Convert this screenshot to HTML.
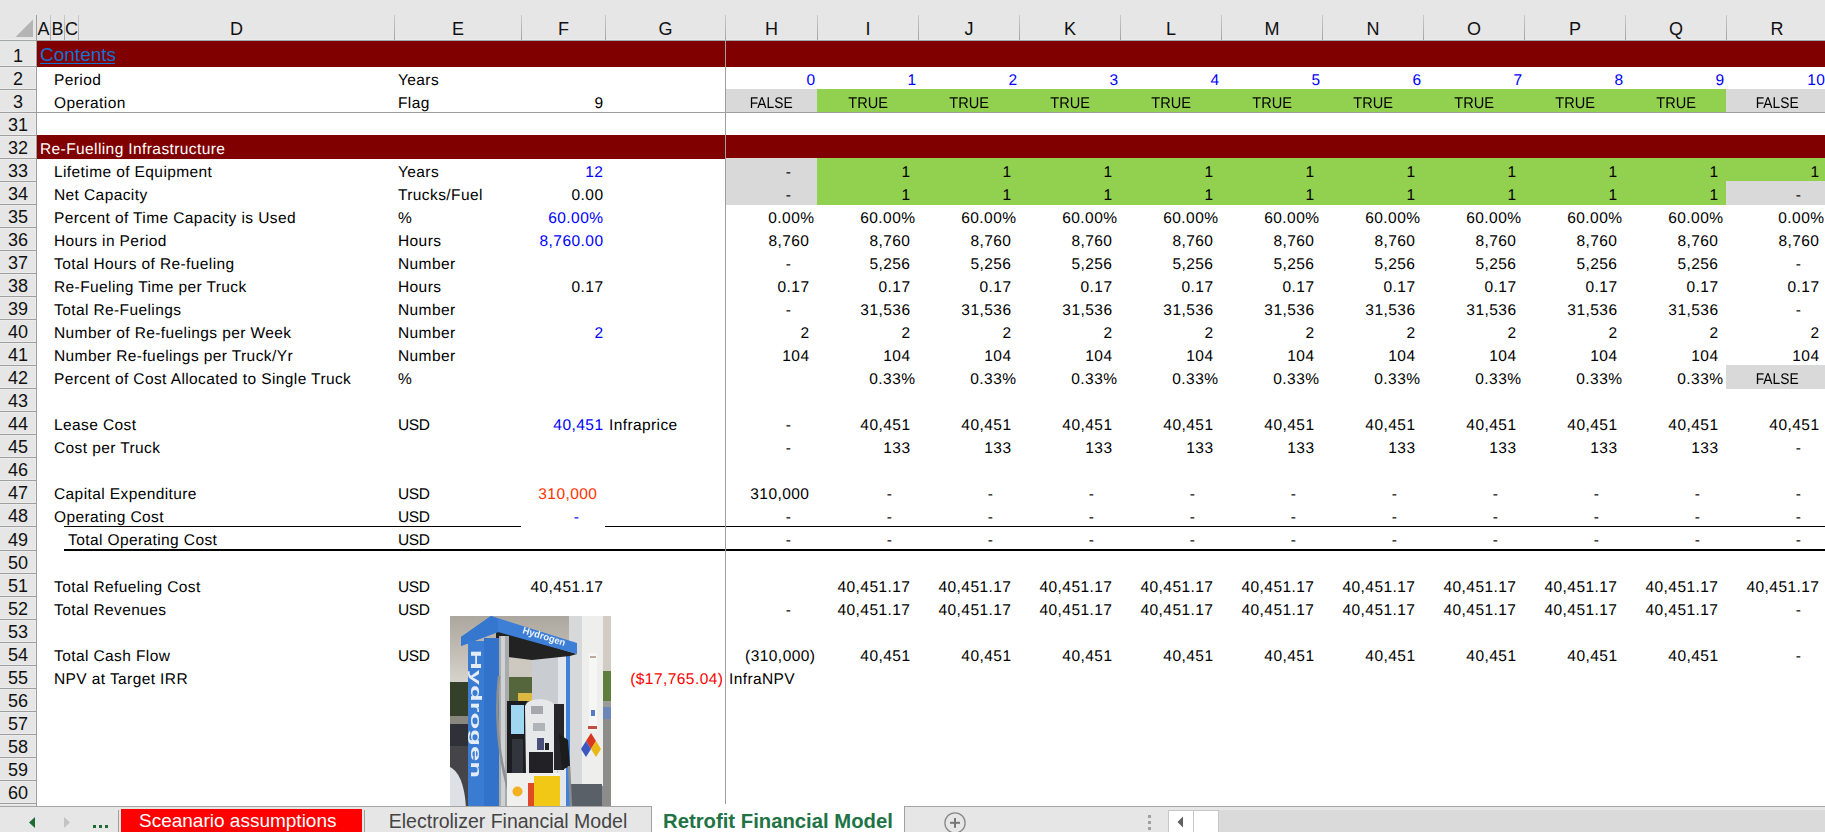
<!DOCTYPE html><html><head><meta charset="utf-8"><style>
html,body{margin:0;padding:0;}
body{width:1825px;height:832px;overflow:hidden;position:relative;background:#fff;font-family:'Liberation Sans', sans-serif;color:#000;}
div{position:absolute;box-sizing:border-box;}
.t{font-size:15.5px;line-height:20px;height:20px;white-space:nowrap;letter-spacing:0.45px;text-rendering:geometricPrecision;}
.lb{letter-spacing:0.4px;}
.r{text-align:right;}
.c{text-align:center;}
.hd{font-size:18px;line-height:20px;height:20px;white-space:nowrap;text-align:center;color:#111;}
</style></head><body>

<div style="left:0;top:0;width:1825px;height:40px;background:#e6e6e6"></div>
<div style="left:0;top:39px;width:1825px;height:1px;background:#ececec"></div>
<div style="left:0;top:40px;width:1825px;height:1px;background:#a2a8a8"></div>
<svg style="position:absolute;left:0;top:0" width="36" height="40"><polygon points="15.5,37 33,37 33,19.5" fill="#b4b4b4"/></svg>
<div style="left:36px;top:15px;width:1px;height:25px;background:linear-gradient(#cacaca,#a4a4a4)"></div>
<div style="left:50px;top:15px;width:1px;height:25px;background:linear-gradient(#cacaca,#a4a4a4)"></div>
<div style="left:64px;top:15px;width:1px;height:25px;background:linear-gradient(#cacaca,#a4a4a4)"></div>
<div style="left:78px;top:15px;width:1px;height:25px;background:linear-gradient(#cacaca,#a4a4a4)"></div>
<div style="left:394px;top:15px;width:1px;height:25px;background:linear-gradient(#cacaca,#a4a4a4)"></div>
<div style="left:521px;top:15px;width:1px;height:25px;background:linear-gradient(#cacaca,#a4a4a4)"></div>
<div style="left:605px;top:15px;width:1px;height:25px;background:linear-gradient(#cacaca,#a4a4a4)"></div>
<div style="left:725px;top:15px;width:1px;height:25px;background:linear-gradient(#cacaca,#a4a4a4)"></div>
<div style="left:817px;top:15px;width:1px;height:25px;background:linear-gradient(#cacaca,#a4a4a4)"></div>
<div style="left:918px;top:15px;width:1px;height:25px;background:linear-gradient(#cacaca,#a4a4a4)"></div>
<div style="left:1019px;top:15px;width:1px;height:25px;background:linear-gradient(#cacaca,#a4a4a4)"></div>
<div style="left:1120px;top:15px;width:1px;height:25px;background:linear-gradient(#cacaca,#a4a4a4)"></div>
<div style="left:1221px;top:15px;width:1px;height:25px;background:linear-gradient(#cacaca,#a4a4a4)"></div>
<div style="left:1322px;top:15px;width:1px;height:25px;background:linear-gradient(#cacaca,#a4a4a4)"></div>
<div style="left:1423px;top:15px;width:1px;height:25px;background:linear-gradient(#cacaca,#a4a4a4)"></div>
<div style="left:1524px;top:15px;width:1px;height:25px;background:linear-gradient(#cacaca,#a4a4a4)"></div>
<div style="left:1625px;top:15px;width:1px;height:25px;background:linear-gradient(#cacaca,#a4a4a4)"></div>
<div style="left:1726px;top:15px;width:1px;height:25px;background:linear-gradient(#cacaca,#a4a4a4)"></div>
<div class="hd" style="left:37px;top:19px;width:13px">A</div>
<div class="hd" style="left:51px;top:19px;width:13px">B</div>
<div class="hd" style="left:65px;top:19px;width:13px">C</div>
<div class="hd" style="left:79px;top:19px;width:315px">D</div>
<div class="hd" style="left:395px;top:19px;width:126px">E</div>
<div class="hd" style="left:522px;top:19px;width:83px">F</div>
<div class="hd" style="left:606px;top:19px;width:119px">G</div>
<div class="hd" style="left:726px;top:19px;width:91px">H</div>
<div class="hd" style="left:818px;top:19px;width:100px">I</div>
<div class="hd" style="left:919px;top:19px;width:100px">J</div>
<div class="hd" style="left:1020px;top:19px;width:100px">K</div>
<div class="hd" style="left:1121px;top:19px;width:100px">L</div>
<div class="hd" style="left:1222px;top:19px;width:100px">M</div>
<div class="hd" style="left:1323px;top:19px;width:100px">N</div>
<div class="hd" style="left:1424px;top:19px;width:100px">O</div>
<div class="hd" style="left:1525px;top:19px;width:100px">P</div>
<div class="hd" style="left:1626px;top:19px;width:100px">Q</div>
<div class="hd" style="left:1727px;top:19px;width:100px">R</div>
<div style="left:0;top:41px;width:36px;height:765px;background:#e6e6e6"></div>
<div style="left:35px;top:41px;width:1px;height:765px;background:#ececec"></div>
<div style="left:36px;top:15px;width:1px;height:791px;background:#9e9e9e"></div>
<div style="left:0;top:65px;width:35px;height:3px;background:#ececec"></div>
<div style="left:0;top:66px;width:36px;height:1px;background:#9e9e9e"></div>
<div class="hd" style="left:0;top:46px;width:36px">1</div>
<div style="left:0;top:88px;width:35px;height:3px;background:#ececec"></div>
<div style="left:0;top:89px;width:36px;height:1px;background:#9e9e9e"></div>
<div class="hd" style="left:0;top:69px;width:36px">2</div>
<div style="left:0;top:111px;width:35px;height:3px;background:#ececec"></div>
<div style="left:0;top:112px;width:36px;height:1px;background:#9e9e9e"></div>
<div class="hd" style="left:0;top:92px;width:36px">3</div>
<div style="left:0;top:134px;width:35px;height:3px;background:#ececec"></div>
<div style="left:0;top:135px;width:36px;height:1px;background:#9e9e9e"></div>
<div class="hd" style="left:0;top:115px;width:36px">31</div>
<div style="left:0;top:157px;width:35px;height:3px;background:#ececec"></div>
<div style="left:0;top:158px;width:36px;height:1px;background:#9e9e9e"></div>
<div class="hd" style="left:0;top:138px;width:36px">32</div>
<div style="left:0;top:180px;width:35px;height:3px;background:#ececec"></div>
<div style="left:0;top:181px;width:36px;height:1px;background:#9e9e9e"></div>
<div class="hd" style="left:0;top:161px;width:36px">33</div>
<div style="left:0;top:203px;width:35px;height:3px;background:#ececec"></div>
<div style="left:0;top:204px;width:36px;height:1px;background:#9e9e9e"></div>
<div class="hd" style="left:0;top:184px;width:36px">34</div>
<div style="left:0;top:226px;width:35px;height:3px;background:#ececec"></div>
<div style="left:0;top:227px;width:36px;height:1px;background:#9e9e9e"></div>
<div class="hd" style="left:0;top:207px;width:36px">35</div>
<div style="left:0;top:249px;width:35px;height:3px;background:#ececec"></div>
<div style="left:0;top:250px;width:36px;height:1px;background:#9e9e9e"></div>
<div class="hd" style="left:0;top:230px;width:36px">36</div>
<div style="left:0;top:272px;width:35px;height:3px;background:#ececec"></div>
<div style="left:0;top:273px;width:36px;height:1px;background:#9e9e9e"></div>
<div class="hd" style="left:0;top:253px;width:36px">37</div>
<div style="left:0;top:295px;width:35px;height:3px;background:#ececec"></div>
<div style="left:0;top:296px;width:36px;height:1px;background:#9e9e9e"></div>
<div class="hd" style="left:0;top:276px;width:36px">38</div>
<div style="left:0;top:318px;width:35px;height:3px;background:#ececec"></div>
<div style="left:0;top:319px;width:36px;height:1px;background:#9e9e9e"></div>
<div class="hd" style="left:0;top:299px;width:36px">39</div>
<div style="left:0;top:341px;width:35px;height:3px;background:#ececec"></div>
<div style="left:0;top:342px;width:36px;height:1px;background:#9e9e9e"></div>
<div class="hd" style="left:0;top:322px;width:36px">40</div>
<div style="left:0;top:364px;width:35px;height:3px;background:#ececec"></div>
<div style="left:0;top:365px;width:36px;height:1px;background:#9e9e9e"></div>
<div class="hd" style="left:0;top:345px;width:36px">41</div>
<div style="left:0;top:387px;width:35px;height:3px;background:#ececec"></div>
<div style="left:0;top:388px;width:36px;height:1px;background:#9e9e9e"></div>
<div class="hd" style="left:0;top:368px;width:36px">42</div>
<div style="left:0;top:410px;width:35px;height:3px;background:#ececec"></div>
<div style="left:0;top:411px;width:36px;height:1px;background:#9e9e9e"></div>
<div class="hd" style="left:0;top:391px;width:36px">43</div>
<div style="left:0;top:433px;width:35px;height:3px;background:#ececec"></div>
<div style="left:0;top:434px;width:36px;height:1px;background:#9e9e9e"></div>
<div class="hd" style="left:0;top:414px;width:36px">44</div>
<div style="left:0;top:456px;width:35px;height:3px;background:#ececec"></div>
<div style="left:0;top:457px;width:36px;height:1px;background:#9e9e9e"></div>
<div class="hd" style="left:0;top:437px;width:36px">45</div>
<div style="left:0;top:479px;width:35px;height:3px;background:#ececec"></div>
<div style="left:0;top:480px;width:36px;height:1px;background:#9e9e9e"></div>
<div class="hd" style="left:0;top:460px;width:36px">46</div>
<div style="left:0;top:502px;width:35px;height:3px;background:#ececec"></div>
<div style="left:0;top:503px;width:36px;height:1px;background:#9e9e9e"></div>
<div class="hd" style="left:0;top:483px;width:36px">47</div>
<div style="left:0;top:525px;width:35px;height:3px;background:#ececec"></div>
<div style="left:0;top:526px;width:36px;height:1px;background:#9e9e9e"></div>
<div class="hd" style="left:0;top:506px;width:36px">48</div>
<div style="left:0;top:549px;width:35px;height:3px;background:#ececec"></div>
<div style="left:0;top:550px;width:36px;height:1px;background:#9e9e9e"></div>
<div class="hd" style="left:0;top:530px;width:36px">49</div>
<div style="left:0;top:572px;width:35px;height:3px;background:#ececec"></div>
<div style="left:0;top:573px;width:36px;height:1px;background:#9e9e9e"></div>
<div class="hd" style="left:0;top:553px;width:36px">50</div>
<div style="left:0;top:595px;width:35px;height:3px;background:#ececec"></div>
<div style="left:0;top:596px;width:36px;height:1px;background:#9e9e9e"></div>
<div class="hd" style="left:0;top:576px;width:36px">51</div>
<div style="left:0;top:618px;width:35px;height:3px;background:#ececec"></div>
<div style="left:0;top:619px;width:36px;height:1px;background:#9e9e9e"></div>
<div class="hd" style="left:0;top:599px;width:36px">52</div>
<div style="left:0;top:641px;width:35px;height:3px;background:#ececec"></div>
<div style="left:0;top:642px;width:36px;height:1px;background:#9e9e9e"></div>
<div class="hd" style="left:0;top:622px;width:36px">53</div>
<div style="left:0;top:664px;width:35px;height:3px;background:#ececec"></div>
<div style="left:0;top:665px;width:36px;height:1px;background:#9e9e9e"></div>
<div class="hd" style="left:0;top:645px;width:36px">54</div>
<div style="left:0;top:687px;width:35px;height:3px;background:#ececec"></div>
<div style="left:0;top:688px;width:36px;height:1px;background:#9e9e9e"></div>
<div class="hd" style="left:0;top:668px;width:36px">55</div>
<div style="left:0;top:710px;width:35px;height:3px;background:#ececec"></div>
<div style="left:0;top:711px;width:36px;height:1px;background:#9e9e9e"></div>
<div class="hd" style="left:0;top:691px;width:36px">56</div>
<div style="left:0;top:733px;width:35px;height:3px;background:#ececec"></div>
<div style="left:0;top:734px;width:36px;height:1px;background:#9e9e9e"></div>
<div class="hd" style="left:0;top:714px;width:36px">57</div>
<div style="left:0;top:756px;width:35px;height:3px;background:#ececec"></div>
<div style="left:0;top:757px;width:36px;height:1px;background:#9e9e9e"></div>
<div class="hd" style="left:0;top:737px;width:36px">58</div>
<div style="left:0;top:779px;width:35px;height:3px;background:#ececec"></div>
<div style="left:0;top:780px;width:36px;height:1px;background:#9e9e9e"></div>
<div class="hd" style="left:0;top:760px;width:36px">59</div>
<div style="left:0;top:802px;width:35px;height:3px;background:#ececec"></div>
<div style="left:0;top:803px;width:36px;height:1px;background:#9e9e9e"></div>
<div class="hd" style="left:0;top:783px;width:36px">60</div>
<div style="left:37px;top:41px;width:1788px;height:26px;background:#800000"></div>
<div style="left:37px;top:135px;width:1788px;height:24px;background:#800000"></div>
<div style="left:726px;top:89px;width:91px;height:24px;background:#d9d9d9"></div>
<div style="left:817px;top:89px;width:909px;height:24px;background:#92d050"></div>
<div style="left:1726px;top:89px;width:99px;height:24px;background:#d9d9d9"></div>
<div style="left:726px;top:158px;width:91px;height:24px;background:#d9d9d9"></div>
<div style="left:817px;top:158px;width:1008px;height:24px;background:#92d050"></div>
<div style="left:726px;top:181px;width:91px;height:24px;background:#d9d9d9"></div>
<div style="left:817px;top:181px;width:909px;height:24px;background:#92d050"></div>
<div style="left:1726px;top:181px;width:99px;height:24px;background:#d9d9d9"></div>
<div style="left:1726px;top:365px;width:99px;height:24px;background:#d9d9d9"></div>
<div style="left:64px;top:526px;width:457px;height:1px;background:#000"></div>
<div style="left:605px;top:526px;width:1220px;height:1px;background:#000"></div>
<div style="left:64px;top:549px;width:1761px;height:2px;background:#000"></div>
<div style="left:725px;top:41px;width:1px;height:763px;background:#9e9e9e"></div>
<div style="left:37px;top:112px;width:1788px;height:1px;background:#9e9e9e"></div>
<div class="t lb" style="top:71px;left:54px;">Period</div>
<div class="t lb" style="top:94px;left:54px;">Operation</div>
<div class="t lb" style="top:163px;left:54px;">Lifetime of Equipment</div>
<div class="t lb" style="top:186px;left:54px;">Net Capacity</div>
<div class="t lb" style="top:209px;left:54px;">Percent of Time Capacity is Used</div>
<div class="t lb" style="top:232px;left:54px;">Hours in Period</div>
<div class="t lb" style="top:255px;left:54px;">Total Hours of Re-fueling</div>
<div class="t lb" style="top:278px;left:54px;">Re-Fueling Time per Truck</div>
<div class="t lb" style="top:301px;left:54px;">Total Re-Fuelings</div>
<div class="t lb" style="top:324px;left:54px;">Number of Re-fuelings per Week</div>
<div class="t lb" style="top:347px;left:54px;">Number Re-fuelings per Truck/Yr</div>
<div class="t lb" style="top:370px;left:54px;">Percent of Cost Allocated to Single Truck</div>
<div class="t lb" style="top:416px;left:54px;">Lease Cost</div>
<div class="t lb" style="top:439px;left:54px;">Cost per Truck</div>
<div class="t lb" style="top:485px;left:54px;">Capital Expenditure</div>
<div class="t lb" style="top:508px;left:54px;">Operating Cost</div>
<div class="t lb" style="top:578px;left:54px;">Total Refueling Cost</div>
<div class="t lb" style="top:601px;left:54px;">Total Revenues</div>
<div class="t lb" style="top:647px;left:54px;">Total Cash Flow</div>
<div class="t lb" style="top:670px;left:54px;">NPV at Target IRR</div>
<div class="t lb" style="top:531px;left:68px;">Total Operating Cost</div>
<div class="t lb" style="top:71px;left:398px;">Years</div>
<div class="t lb" style="top:94px;left:398px;">Flag</div>
<div class="t lb" style="top:163px;left:398px;">Years</div>
<div class="t lb" style="top:186px;left:398px;">Trucks/Fuel</div>
<div class="t lb" style="top:209px;left:398px;">%</div>
<div class="t lb" style="top:232px;left:398px;">Hours</div>
<div class="t lb" style="top:255px;left:398px;">Number</div>
<div class="t lb" style="top:278px;left:398px;">Hours</div>
<div class="t lb" style="top:301px;left:398px;">Number</div>
<div class="t lb" style="top:324px;left:398px;">Number</div>
<div class="t lb" style="top:347px;left:398px;">Number</div>
<div class="t lb" style="top:370px;left:398px;">%</div>
<div class="t lb" style="top:416px;left:398px;letter-spacing:-0.4px;">USD</div>
<div class="t lb" style="top:485px;left:398px;letter-spacing:-0.4px;">USD</div>
<div class="t lb" style="top:508px;left:398px;letter-spacing:-0.4px;">USD</div>
<div class="t lb" style="top:531px;left:398px;letter-spacing:-0.4px;">USD</div>
<div class="t lb" style="top:578px;left:398px;letter-spacing:-0.4px;">USD</div>
<div class="t lb" style="top:601px;left:398px;letter-spacing:-0.4px;">USD</div>
<div class="t lb" style="top:647px;left:398px;letter-spacing:-0.4px;">USD</div>
<div style="left:40px;top:45px;font-size:19px;line-height:20px;height:20px;color:#1372d2;white-space:nowrap">Contents</div>
<div style="left:40px;top:63px;width:75px;height:1px;background:#1372d2"></div>
<div class="t lb" style="top:140px;left:40px;color:#fff;">Re-Fuelling Infrastructure</div>
<div class="t" style="top:94px;right:1221.55px;">9</div>
<div class="t" style="top:163px;right:1221.55px;color:#0000ff;">12</div>
<div class="t" style="top:186px;right:1221.55px;">0.00</div>
<div class="t" style="top:209px;right:1221.55px;color:#0000ff;">60.00%</div>
<div class="t" style="top:232px;right:1221.55px;color:#0000ff;">8,760.00</div>
<div class="t" style="top:278px;right:1221.55px;">0.17</div>
<div class="t" style="top:324px;right:1221.55px;color:#0000ff;">2</div>
<div class="t" style="top:416px;right:1221.55px;color:#0000ff;">40,451</div>
<div class="t lb" style="top:416px;left:609px;">Infraprice</div>
<div class="t" style="top:485px;right:1227.55px;color:#ff3300;">310,000</div>
<div class="t" style="top:508px;right:1245.55px;color:#0000ff;">-</div>
<div class="t" style="top:578px;right:1221.55px;">40,451.17</div>
<div class="t" style="top:670px;right:1101.55px;color:#ff0000;">($17,765.04)</div>
<div class="t lb" style="top:670px;left:729px;">InfraNPV</div>
<div class="t" style="top:71px;right:1009.55px;color:#0000ff;">0</div>
<div class="t c" style="top:94px;left:726px;width:91px;letter-spacing:0;"><span style="display:inline-block;transform:scaleX(0.89)">FALSE</span></div>
<div class="t" style="top:163px;right:1033.55px;">-</div>
<div class="t" style="top:186px;right:1033.55px;">-</div>
<div class="t" style="top:209px;right:1010.55px;">0.00%</div>
<div class="t" style="top:232px;right:1015.55px;">8,760</div>
<div class="t" style="top:255px;right:1033.55px;">-</div>
<div class="t" style="top:278px;right:1015.55px;">0.17</div>
<div class="t" style="top:301px;right:1033.55px;">-</div>
<div class="t" style="top:324px;right:1015.55px;">2</div>
<div class="t" style="top:347px;right:1015.55px;">104</div>
<div class="t" style="top:416px;right:1033.55px;">-</div>
<div class="t" style="top:439px;right:1033.55px;">-</div>
<div class="t" style="top:485px;right:1015.55px;">310,000</div>
<div class="t" style="top:508px;right:1033.55px;">-</div>
<div class="t" style="top:531px;right:1033.55px;">-</div>
<div class="t" style="top:601px;right:1033.55px;">-</div>
<div class="t" style="top:647px;right:1009.55px;">(310,000)</div>
<div class="t" style="top:71px;right:908.55px;color:#0000ff;">1</div>
<div class="t c" style="top:94px;left:818px;width:100px;letter-spacing:0;"><span style="display:inline-block;transform:scaleX(0.94)">TRUE</span></div>
<div class="t" style="top:163px;right:914.55px;">1</div>
<div class="t" style="top:186px;right:914.55px;">1</div>
<div class="t" style="top:209px;right:909.55px;">60.00%</div>
<div class="t" style="top:232px;right:914.55px;">8,760</div>
<div class="t" style="top:255px;right:914.55px;">5,256</div>
<div class="t" style="top:278px;right:914.55px;">0.17</div>
<div class="t" style="top:301px;right:914.55px;">31,536</div>
<div class="t" style="top:324px;right:914.55px;">2</div>
<div class="t" style="top:347px;right:914.55px;">104</div>
<div class="t" style="top:370px;right:909.55px;">0.33%</div>
<div class="t" style="top:416px;right:914.55px;">40,451</div>
<div class="t" style="top:439px;right:914.55px;">133</div>
<div class="t" style="top:485px;right:932.55px;">-</div>
<div class="t" style="top:508px;right:932.55px;">-</div>
<div class="t" style="top:531px;right:932.55px;">-</div>
<div class="t" style="top:578px;right:914.55px;">40,451.17</div>
<div class="t" style="top:601px;right:914.55px;">40,451.17</div>
<div class="t" style="top:647px;right:914.55px;">40,451</div>
<div class="t" style="top:71px;right:807.55px;color:#0000ff;">2</div>
<div class="t c" style="top:94px;left:919px;width:100px;letter-spacing:0;"><span style="display:inline-block;transform:scaleX(0.94)">TRUE</span></div>
<div class="t" style="top:163px;right:813.55px;">1</div>
<div class="t" style="top:186px;right:813.55px;">1</div>
<div class="t" style="top:209px;right:808.55px;">60.00%</div>
<div class="t" style="top:232px;right:813.55px;">8,760</div>
<div class="t" style="top:255px;right:813.55px;">5,256</div>
<div class="t" style="top:278px;right:813.55px;">0.17</div>
<div class="t" style="top:301px;right:813.55px;">31,536</div>
<div class="t" style="top:324px;right:813.55px;">2</div>
<div class="t" style="top:347px;right:813.55px;">104</div>
<div class="t" style="top:370px;right:808.55px;">0.33%</div>
<div class="t" style="top:416px;right:813.55px;">40,451</div>
<div class="t" style="top:439px;right:813.55px;">133</div>
<div class="t" style="top:485px;right:831.55px;">-</div>
<div class="t" style="top:508px;right:831.55px;">-</div>
<div class="t" style="top:531px;right:831.55px;">-</div>
<div class="t" style="top:578px;right:813.55px;">40,451.17</div>
<div class="t" style="top:601px;right:813.55px;">40,451.17</div>
<div class="t" style="top:647px;right:813.55px;">40,451</div>
<div class="t" style="top:71px;right:706.55px;color:#0000ff;">3</div>
<div class="t c" style="top:94px;left:1020px;width:100px;letter-spacing:0;"><span style="display:inline-block;transform:scaleX(0.94)">TRUE</span></div>
<div class="t" style="top:163px;right:712.55px;">1</div>
<div class="t" style="top:186px;right:712.55px;">1</div>
<div class="t" style="top:209px;right:707.55px;">60.00%</div>
<div class="t" style="top:232px;right:712.55px;">8,760</div>
<div class="t" style="top:255px;right:712.55px;">5,256</div>
<div class="t" style="top:278px;right:712.55px;">0.17</div>
<div class="t" style="top:301px;right:712.55px;">31,536</div>
<div class="t" style="top:324px;right:712.55px;">2</div>
<div class="t" style="top:347px;right:712.55px;">104</div>
<div class="t" style="top:370px;right:707.55px;">0.33%</div>
<div class="t" style="top:416px;right:712.55px;">40,451</div>
<div class="t" style="top:439px;right:712.55px;">133</div>
<div class="t" style="top:485px;right:730.55px;">-</div>
<div class="t" style="top:508px;right:730.55px;">-</div>
<div class="t" style="top:531px;right:730.55px;">-</div>
<div class="t" style="top:578px;right:712.55px;">40,451.17</div>
<div class="t" style="top:601px;right:712.55px;">40,451.17</div>
<div class="t" style="top:647px;right:712.55px;">40,451</div>
<div class="t" style="top:71px;right:605.55px;color:#0000ff;">4</div>
<div class="t c" style="top:94px;left:1121px;width:100px;letter-spacing:0;"><span style="display:inline-block;transform:scaleX(0.94)">TRUE</span></div>
<div class="t" style="top:163px;right:611.55px;">1</div>
<div class="t" style="top:186px;right:611.55px;">1</div>
<div class="t" style="top:209px;right:606.55px;">60.00%</div>
<div class="t" style="top:232px;right:611.55px;">8,760</div>
<div class="t" style="top:255px;right:611.55px;">5,256</div>
<div class="t" style="top:278px;right:611.55px;">0.17</div>
<div class="t" style="top:301px;right:611.55px;">31,536</div>
<div class="t" style="top:324px;right:611.55px;">2</div>
<div class="t" style="top:347px;right:611.55px;">104</div>
<div class="t" style="top:370px;right:606.55px;">0.33%</div>
<div class="t" style="top:416px;right:611.55px;">40,451</div>
<div class="t" style="top:439px;right:611.55px;">133</div>
<div class="t" style="top:485px;right:629.55px;">-</div>
<div class="t" style="top:508px;right:629.55px;">-</div>
<div class="t" style="top:531px;right:629.55px;">-</div>
<div class="t" style="top:578px;right:611.55px;">40,451.17</div>
<div class="t" style="top:601px;right:611.55px;">40,451.17</div>
<div class="t" style="top:647px;right:611.55px;">40,451</div>
<div class="t" style="top:71px;right:504.55px;color:#0000ff;">5</div>
<div class="t c" style="top:94px;left:1222px;width:100px;letter-spacing:0;"><span style="display:inline-block;transform:scaleX(0.94)">TRUE</span></div>
<div class="t" style="top:163px;right:510.55px;">1</div>
<div class="t" style="top:186px;right:510.55px;">1</div>
<div class="t" style="top:209px;right:505.55px;">60.00%</div>
<div class="t" style="top:232px;right:510.55px;">8,760</div>
<div class="t" style="top:255px;right:510.55px;">5,256</div>
<div class="t" style="top:278px;right:510.55px;">0.17</div>
<div class="t" style="top:301px;right:510.55px;">31,536</div>
<div class="t" style="top:324px;right:510.55px;">2</div>
<div class="t" style="top:347px;right:510.55px;">104</div>
<div class="t" style="top:370px;right:505.55px;">0.33%</div>
<div class="t" style="top:416px;right:510.55px;">40,451</div>
<div class="t" style="top:439px;right:510.55px;">133</div>
<div class="t" style="top:485px;right:528.55px;">-</div>
<div class="t" style="top:508px;right:528.55px;">-</div>
<div class="t" style="top:531px;right:528.55px;">-</div>
<div class="t" style="top:578px;right:510.55px;">40,451.17</div>
<div class="t" style="top:601px;right:510.55px;">40,451.17</div>
<div class="t" style="top:647px;right:510.55px;">40,451</div>
<div class="t" style="top:71px;right:403.55px;color:#0000ff;">6</div>
<div class="t c" style="top:94px;left:1323px;width:100px;letter-spacing:0;"><span style="display:inline-block;transform:scaleX(0.94)">TRUE</span></div>
<div class="t" style="top:163px;right:409.55px;">1</div>
<div class="t" style="top:186px;right:409.55px;">1</div>
<div class="t" style="top:209px;right:404.55px;">60.00%</div>
<div class="t" style="top:232px;right:409.55px;">8,760</div>
<div class="t" style="top:255px;right:409.55px;">5,256</div>
<div class="t" style="top:278px;right:409.55px;">0.17</div>
<div class="t" style="top:301px;right:409.55px;">31,536</div>
<div class="t" style="top:324px;right:409.55px;">2</div>
<div class="t" style="top:347px;right:409.55px;">104</div>
<div class="t" style="top:370px;right:404.55px;">0.33%</div>
<div class="t" style="top:416px;right:409.55px;">40,451</div>
<div class="t" style="top:439px;right:409.55px;">133</div>
<div class="t" style="top:485px;right:427.55px;">-</div>
<div class="t" style="top:508px;right:427.55px;">-</div>
<div class="t" style="top:531px;right:427.55px;">-</div>
<div class="t" style="top:578px;right:409.55px;">40,451.17</div>
<div class="t" style="top:601px;right:409.55px;">40,451.17</div>
<div class="t" style="top:647px;right:409.55px;">40,451</div>
<div class="t" style="top:71px;right:302.55px;color:#0000ff;">7</div>
<div class="t c" style="top:94px;left:1424px;width:100px;letter-spacing:0;"><span style="display:inline-block;transform:scaleX(0.94)">TRUE</span></div>
<div class="t" style="top:163px;right:308.55px;">1</div>
<div class="t" style="top:186px;right:308.55px;">1</div>
<div class="t" style="top:209px;right:303.55px;">60.00%</div>
<div class="t" style="top:232px;right:308.55px;">8,760</div>
<div class="t" style="top:255px;right:308.55px;">5,256</div>
<div class="t" style="top:278px;right:308.55px;">0.17</div>
<div class="t" style="top:301px;right:308.55px;">31,536</div>
<div class="t" style="top:324px;right:308.55px;">2</div>
<div class="t" style="top:347px;right:308.55px;">104</div>
<div class="t" style="top:370px;right:303.55px;">0.33%</div>
<div class="t" style="top:416px;right:308.55px;">40,451</div>
<div class="t" style="top:439px;right:308.55px;">133</div>
<div class="t" style="top:485px;right:326.55px;">-</div>
<div class="t" style="top:508px;right:326.55px;">-</div>
<div class="t" style="top:531px;right:326.55px;">-</div>
<div class="t" style="top:578px;right:308.55px;">40,451.17</div>
<div class="t" style="top:601px;right:308.55px;">40,451.17</div>
<div class="t" style="top:647px;right:308.55px;">40,451</div>
<div class="t" style="top:71px;right:201.55px;color:#0000ff;">8</div>
<div class="t c" style="top:94px;left:1525px;width:100px;letter-spacing:0;"><span style="display:inline-block;transform:scaleX(0.94)">TRUE</span></div>
<div class="t" style="top:163px;right:207.55px;">1</div>
<div class="t" style="top:186px;right:207.55px;">1</div>
<div class="t" style="top:209px;right:202.55px;">60.00%</div>
<div class="t" style="top:232px;right:207.55px;">8,760</div>
<div class="t" style="top:255px;right:207.55px;">5,256</div>
<div class="t" style="top:278px;right:207.55px;">0.17</div>
<div class="t" style="top:301px;right:207.55px;">31,536</div>
<div class="t" style="top:324px;right:207.55px;">2</div>
<div class="t" style="top:347px;right:207.55px;">104</div>
<div class="t" style="top:370px;right:202.55px;">0.33%</div>
<div class="t" style="top:416px;right:207.55px;">40,451</div>
<div class="t" style="top:439px;right:207.55px;">133</div>
<div class="t" style="top:485px;right:225.55px;">-</div>
<div class="t" style="top:508px;right:225.55px;">-</div>
<div class="t" style="top:531px;right:225.55px;">-</div>
<div class="t" style="top:578px;right:207.55px;">40,451.17</div>
<div class="t" style="top:601px;right:207.55px;">40,451.17</div>
<div class="t" style="top:647px;right:207.55px;">40,451</div>
<div class="t" style="top:71px;right:100.55px;color:#0000ff;">9</div>
<div class="t c" style="top:94px;left:1626px;width:100px;letter-spacing:0;"><span style="display:inline-block;transform:scaleX(0.94)">TRUE</span></div>
<div class="t" style="top:163px;right:106.55px;">1</div>
<div class="t" style="top:186px;right:106.55px;">1</div>
<div class="t" style="top:209px;right:101.55px;">60.00%</div>
<div class="t" style="top:232px;right:106.55px;">8,760</div>
<div class="t" style="top:255px;right:106.55px;">5,256</div>
<div class="t" style="top:278px;right:106.55px;">0.17</div>
<div class="t" style="top:301px;right:106.55px;">31,536</div>
<div class="t" style="top:324px;right:106.55px;">2</div>
<div class="t" style="top:347px;right:106.55px;">104</div>
<div class="t" style="top:370px;right:101.55px;">0.33%</div>
<div class="t" style="top:416px;right:106.55px;">40,451</div>
<div class="t" style="top:439px;right:106.55px;">133</div>
<div class="t" style="top:485px;right:124.55px;">-</div>
<div class="t" style="top:508px;right:124.55px;">-</div>
<div class="t" style="top:531px;right:124.55px;">-</div>
<div class="t" style="top:578px;right:106.55px;">40,451.17</div>
<div class="t" style="top:601px;right:106.55px;">40,451.17</div>
<div class="t" style="top:647px;right:106.55px;">40,451</div>
<div class="t" style="top:71px;right:-0.45px;color:#0000ff;">10</div>
<div class="t c" style="top:94px;left:1727px;width:100px;letter-spacing:0;"><span style="display:inline-block;transform:scaleX(0.89)">FALSE</span></div>
<div class="t" style="top:163px;right:5.55px;">1</div>
<div class="t" style="top:186px;right:23.55px;">-</div>
<div class="t" style="top:209px;right:0.55px;">0.00%</div>
<div class="t" style="top:232px;right:5.55px;">8,760</div>
<div class="t" style="top:255px;right:23.55px;">-</div>
<div class="t" style="top:278px;right:5.55px;">0.17</div>
<div class="t" style="top:301px;right:23.55px;">-</div>
<div class="t" style="top:324px;right:5.55px;">2</div>
<div class="t" style="top:347px;right:5.55px;">104</div>
<div class="t c" style="top:370px;left:1727px;width:100px;letter-spacing:0;"><span style="display:inline-block;transform:scaleX(0.89)">FALSE</span></div>
<div class="t" style="top:416px;right:5.55px;">40,451</div>
<div class="t" style="top:439px;right:23.55px;">-</div>
<div class="t" style="top:485px;right:23.55px;">-</div>
<div class="t" style="top:508px;right:23.55px;">-</div>
<div class="t" style="top:531px;right:23.55px;">-</div>
<div class="t" style="top:578px;right:5.55px;">40,451.17</div>
<div class="t" style="top:601px;right:23.55px;">-</div>
<div class="t" style="top:647px;right:23.55px;">-</div>
<svg style="position:absolute;left:450px;top:616px" width="161" height="190" viewBox="0 0 161 190">
<defs><filter id="bl" x="0" y="0" width="1" height="1"><feGaussianBlur stdDeviation="0.5"/></filter>
<clipPath id="cp"><rect x="0" y="0" width="161" height="190"/></clipPath></defs>
<g filter="url(#bl)" clip-path="url(#cp)">
<rect x="-2" y="-2" width="165" height="194" fill="#4c4c4a"/>
<!-- ceiling -->
<linearGradient id="ceil" x1="0" y1="0" x2="0" y2="1"><stop offset="0" stop-color="#aaa69e"/><stop offset="0.6" stop-color="#c4c0b8"/><stop offset="1" stop-color="#d6d3cd"/></linearGradient>
<rect x="-2" y="-2" width="165" height="68" fill="url(#ceil)"/>
<!-- left trees / ground -->
<rect x="-2" y="66" width="20" height="34" fill="#353f2c"/>
<rect x="-2" y="100" width="20" height="8" fill="#8a8680"/>
<rect x="-2" y="108" width="20" height="22" fill="#2f3338"/>
<rect x="-2" y="130" width="20" height="62" fill="#45454a"/>
<path d="M-2,150 Q14,156 16,192 L-2,192 Z" fill="#dde1e6"/>
<!-- behind pump: ceiling & trees -->
<rect x="58" y="40" width="26" height="21" fill="#cdc9c1"/>
<rect x="58" y="61" width="26" height="24" fill="#55663e"/>
<rect x="68" y="77" width="14" height="8" fill="#dcb840"/>
<!-- far right strip -->
<rect x="152" y="-2" width="11" height="57" fill="#d0ccc4"/>
<rect x="152" y="55" width="11" height="30" fill="#5f7e3c"/>
<rect x="152" y="85" width="11" height="6" fill="#9a9a98"/>
<rect x="152" y="91" width="11" height="12" fill="#6c86b8"/>
<rect x="152" y="103" width="11" height="89" fill="#8c8c8a"/>
<!-- white building pillar -->
<rect x="119" y="-2" width="34" height="172" fill="#eeeeec"/>
<rect x="119" y="-2" width="13" height="172" fill="#d6d8da"/>
<rect x="119" y="168" width="33" height="24" fill="#5a6068"/>
<rect x="139" y="37" width="8" height="78" fill="#f6f6f4"/>
<rect x="140" y="40" width="6" height="2" fill="#c0a8a0"/>
<rect x="141" y="94" width="4" height="6" fill="#5a78c8"/>
<rect x="138" y="110" width="9" height="3" fill="#c05040"/>
<polygon points="141,117 146,125 141,133 136,125" fill="#d83820"/>
<polygon points="136,125 141,133 136,141 131,133" fill="#3a58c0"/>
<polygon points="146,125 151,133 146,141 141,133" fill="#e8b818"/>
<!-- dispenser back pillar -->
<rect x="82" y="40" width="36" height="152" fill="#c9cdd2"/>
<rect x="108" y="40" width="10" height="152" fill="#e3e6ea"/>
<rect x="116" y="38" width="4" height="154" fill="#3f80d8"/>
<!-- canopy underside black -->
<polygon points="46,14 127,38 120,40 82,44 58,41 46,41" fill="#222222"/>
<!-- canopy -->
<polygon points="11,21 41,0 127,27 127,38 48,16 11,30" fill="#3c7fd6"/>
<polygon points="11,21 41,0 48,3 48,16 11,30" fill="#3577cf"/>
<text x="72" y="17" transform="rotate(17 72 17)" font-family="Liberation Sans" font-weight="bold" font-size="9.5" fill="#f0f4fa">Hydrogen</text>
<!-- blue pillar -->
<rect x="18" y="25" width="31" height="167" fill="#3b7bd3"/>
<rect x="34" y="22" width="15" height="170" fill="#3272cb"/>
<text x="0" y="0" transform="translate(20.5,34) rotate(90)" font-family="Liberation Sans" font-weight="bold" font-size="15.5" fill="#e4ecf6" textLength="128" lengthAdjust="spacingAndGlyphs">Hydrogen</text>
<!-- silver hose column -->
<rect x="49" y="20" width="10" height="172" fill="#a8aaac"/>
<rect x="51" y="20" width="4" height="172" fill="#cfd1d3"/>
<path d="M49,60 Q42,130 64,192" stroke="#8e9092" stroke-width="2.5" fill="none"/>
<!-- dispenser black panel -->
<rect x="57" y="85" width="20" height="78" fill="#1c1e22"/>
<rect x="61" y="89" width="13" height="29" fill="#9fd6f2"/>
<rect x="62" y="123" width="11" height="36" fill="#30343a"/>
<!-- center white unit -->
<path d="M75,90 Q76,84 90,83 Q104,84 106,92 L107,158 L76,158 Z" fill="#e6e8ea"/>
<rect x="81" y="90" width="12" height="8" fill="#a4a8ac"/>
<rect x="83" y="107" width="12" height="8" fill="#b0b4b8"/>
<rect x="87" y="122" width="7" height="12" fill="#485078"/>
<rect x="95" y="127" width="4" height="7" fill="#202020"/>
<rect x="79" y="136" width="24" height="21" fill="#202226"/>
<!-- right nozzle housing -->
<rect x="104" y="88" width="10" height="66" fill="#26282c"/>
<path d="M109,118 L118,124 L120,150 L112,154 Z" fill="#1a1a1c"/>
<path d="M119,150 L121,192" stroke="#8a8c8e" stroke-width="2.5" fill="none"/>
<!-- bottom base -->
<rect x="57" y="157" width="53" height="35" fill="#f0f0ee"/>
<rect x="84" y="160" width="26" height="32" fill="#f2c818"/>
<rect x="78" y="167" width="6" height="25" fill="#e04a28"/>
<ellipse cx="67.5" cy="175.5" rx="5" ry="5" fill="#f2b020"/>
</g>
</svg>

<div style="left:0;top:806px;width:1825px;height:1px;background:#a6a6a6"></div>
<div style="left:0;top:807px;width:1825px;height:25px;background:#e6e6e6"></div>
<div style="left:1219px;top:810px;width:606px;height:22px;background:#dadada"></div>
<svg style="position:absolute;left:0;top:806px" width="120" height="26">
<polygon points="29,16.5 35,11 35,22" fill="#1e6b34"/>
<polygon points="64,11 70,16.5 64,22" fill="#c3c3c3"/>
<rect x="93" y="19" width="3" height="3" fill="#1e6b34"/>
<rect x="99" y="19" width="3" height="3" fill="#1e6b34"/>
<rect x="105" y="19" width="3" height="3" fill="#1e6b34"/>
</svg>
<div style="left:118px;top:810px;width:1px;height:22px;background:#a0a0a0"></div>
<div style="left:121px;top:809px;width:241px;height:23px;background:#ff0000"></div>
<div style="left:139px;top:811px;height:20px;line-height:20px;font-size:19px;color:#fff;white-space:nowrap">Sceanario assumptions</div>
<div style="left:364px;top:810px;width:1px;height:22px;background:#a0a0a0"></div>
<div style="left:365px;top:811px;width:286px;height:20px;line-height:20px;font-size:19.5px;color:#444;text-align:center;white-space:nowrap">Electrolizer Financial Model</div>
<div style="left:651px;top:806px;width:1px;height:26px;background:#a0a0a0"></div>
<div style="left:652px;top:806px;width:252px;height:26px;background:#fff"></div>
<div style="left:663px;top:811px;height:20px;line-height:20px;font-size:20.3px;font-weight:bold;color:#217346;white-space:nowrap">Retrofit Financial Model</div>
<div style="left:904px;top:806px;width:1px;height:26px;background:#a0a0a0"></div>
<svg style="position:absolute;left:940px;top:808px" width="30" height="26">
<circle cx="15" cy="14.9" r="10.1" fill="none" stroke="#888" stroke-width="1.3"/>
<rect x="10" y="13.8" width="10" height="2" fill="#777"/>
<rect x="14" y="10" width="2" height="9.8" fill="#777"/>
</svg>
<div style="left:1148px;top:815px;width:3px;height:3px;background:#a0a0a0"></div>
<div style="left:1148px;top:821px;width:3px;height:3px;background:#a0a0a0"></div>
<div style="left:1148px;top:827px;width:3px;height:3px;background:#a0a0a0"></div>
<div style="left:1168px;top:810px;width:26px;height:22px;background:#fff;border:1px solid #c6c6c6;border-bottom:none"></div>
<div style="left:1193px;top:810px;width:26px;height:22px;background:#fff;border:1px solid #c6c6c6;border-bottom:none"></div>
<svg style="position:absolute;left:1168px;top:810px" width="26" height="22">
<polygon points="9.5,12 15,6.5 15,17.5" fill="#606060"/>
</svg>

</body></html>
